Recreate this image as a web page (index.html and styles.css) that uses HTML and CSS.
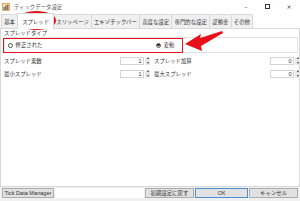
FILE: index.html
```html
<!DOCTYPE html>
<html lang="ja">
<head>
<meta charset="utf-8">
<link rel="stylesheet" href="styles.css">
</head>
<body>
<div class="window">
  <div class="titlebar">
    <svg class="appicon" width="8" height="8" viewBox="0 0 8 8">
      <rect x="0.5" y="0.5" width="7" height="7" fill="#f4d9a0" stroke="#c98a2a" stroke-width="0.6"/>
      <rect x="1.5" y="4" width="1.3" height="3" fill="#3a9a3a"/>
      <rect x="3.3" y="2.5" width="1.3" height="4.5" fill="#2f6fc4"/>
      <rect x="5.1" y="1.5" width="1.3" height="5.5" fill="#d24a2a"/>
    </svg>
    <span class="title">ティックデータ設定</span>
    <div class="controls">
      <span class="ctl">&#8211;</span>
      <span class="ctl box"></span>
      <span class="ctl">&#215;</span>
    </div>
  </div>
  <div class="tabs">
    <div class="tab">基本</div>
    <div class="tab active">スプレッド</div>
    <div class="tab">スリッページ</div>
    <div class="tab">エキゾチックバー</div>
    <div class="tab">高度な設定</div>
    <div class="tab">専門的な設定</div>
    <div class="tab">証拠金</div>
    <div class="tab">その他</div>
  </div>
  <div class="panel">
    <div class="label">スプレッドタイプ</div>
    <div class="group">
      <label class="radio"><span class="dot"></span>修正された</label>
      <label class="radio"><span class="dot on"></span>変動</label>
    </div>
    <div class="fields">
      <div class="field"><span>スプレッド乗数</span><div class="spin"><span class="val">1</span><span class="arrows"><i class="up"></i><i class="down"></i></span></div></div>
      <div class="field"><span>スプレッド加算</span><div class="spin"><span class="val">0</span><span class="arrows"><i class="up"></i><i class="down"></i></span></div></div>
      <div class="field"><span>最小スプレッド</span><div class="spin"><span class="val">1</span><span class="arrows"><i class="up"></i><i class="down"></i></span></div></div>
      <div class="field"><span>最大スプレッド</span><div class="spin"><span class="val">0</span><span class="arrows"><i class="up"></i><i class="down"></i></span></div></div>
    </div>
  </div>
  <div class="footer">
    <button class="btn tdm">Tick Data Manager</button>
    <div class="blank"></div>
    <button class="btn reset">初期設定に戻す</button>
    <button class="btn ok">OK</button>
    <button class="btn cancel">キャンセル</button>
  </div>

  <div class="mark-ellipse"></div>
  <div class="mark-rect"></div>
  <svg class="mark-arrow" width="40" height="24" viewBox="0 0 40 24">
    <path d="M38 1 L16 8 L17 4 L1 14 L18 21 L17 16 L39 3 Z" fill="#e8101a"/>
  </svg>
</div>
</body>
</html>
```
FILE: styles.css
```css
* { box-sizing: border-box; }
html, body { margin: 0; padding: 0; }
body {
  width: 300px;
  height: 201px;
  overflow: hidden;
  background: #ffffff;
  font-family: "Noto Sans CJK JP", "Noto Sans", sans-serif;
  font-size: 5.4px;
  color: #222;
}
.window {
  position: relative;
  width: 300px;
  height: 201px;
  display: flex;
  flex-direction: column;
  background: #f0f0f0;
}
.titlebar {
  height: 13px;
  flex: none;
  display: flex;
  align-items: center;
  padding-left: 2px;
  background: #ffffff;
}
.appicon { display: block; margin-right: 4px; }
.title { color: #555; font-size: 5.4px; }
.controls {
  margin-left: auto;
  display: flex;
  align-items: center;
  height: 13px;
}
.ctl {
  width: 22px;
  text-align: center;
  color: #333;
  font-family: "DejaVu Sans", sans-serif;
  font-size: 6px;
}
.ctl.box {
  width: 5px;
  height: 5px;
  border: 0.8px solid #333;
  margin: 0 8px;
}
.tabs {
  height: 16px;
  flex: none;
  display: flex;
  align-items: flex-end;
  padding-left: 1px;
  background: #ffffff;
  border-bottom: 1px solid #d9d9d9;
}
.tab {
  height: 14px;
  display: flex;
  align-items: center;
  padding: 0 2.2px;
  background: #f0f0f0;
  border: 1px solid #d9d9d9;
  border-bottom: none;
  margin-right: -1px;
  color: #333;
  white-space: nowrap;
}
.tab.active {
  height: 16px;
  background: #ffffff;
  padding: 0 4px;
  margin-bottom: -1px;
  position: relative;
  z-index: 1;
}
.panel {
  flex: 1;
  background: #ffffff;
  border-left: 1px solid #d9d9d9;
  border-right: 1px solid #d9d9d9;
  border-bottom: 1px solid #d9d9d9;
  padding: 1px 1px 0 3px;
}
.label { height: 7px; line-height: 7px; color: #333; }
.group {
  height: 16px;
  border: 1px solid #e3e3e3;
  display: grid;
  grid-template-columns: 148px 1fr;
  align-items: center;
  padding-left: 3px;
}
.radio { display: flex; align-items: center; gap: 2.5px; color: #333; }
.dot {
  width: 5px; height: 5px;
  border: 0.8px solid #555;
  border-radius: 50%;
  display: inline-flex;
  align-items: center;
  justify-content: center;
}
.dot.on::after {
  content: "";
  width: 2.4px; height: 2.4px;
  border-radius: 50%;
  background: #222;
}
.fields {
  display: grid;
  grid-template-columns: 146px 146px;
  column-gap: 4px;
  row-gap: 4px;
  margin-top: 3px;
  padding-right: 1px;
}
.field {
  height: 9px;
  display: flex;
  align-items: center;
  justify-content: space-between;
  color: #333;
}
.spin { display: flex; align-items: center; height: 9px; }
.val {
  width: 24px;
  height: 8px;
  border: 1px solid #d4d4d4;
  text-align: right;
  padding-right: 1.5px;
  line-height: 6px;
  font-family: "Liberation Sans", sans-serif;
  font-size: 5.5px;
}
.arrows {
  width: 5px;
  height: 8px;
  margin-left: 1px;
  display: flex;
  flex-direction: column;
  justify-content: space-between;
  background: #e8e8e8;
  padding: 0.5px 0;
}
.arrows i {
  width: 0; height: 0;
  margin: 0 auto;
  border-left: 1.6px solid transparent;
  border-right: 1.6px solid transparent;
}
.arrows .up { border-bottom: 2.4px solid #444; }
.arrows .down { border-top: 2.4px solid #444; }
.footer {
  height: 14px;
  flex: none;
  display: flex;
  align-items: flex-start;
  padding: 1px 2px 0 2px;
  background: #f0f0f0;
}
.btn {
  height: 10px;
  margin: 0;
  padding: 0;
  border: 1px solid #adadad;
  background: #e1e1e1;
  font-family: "Noto Sans CJK JP", "Noto Sans", sans-serif;
  font-size: 5.4px;
  color: #333;
  line-height: 8px;
}
.tdm {
  width: 52px;
  font-family: "Liberation Sans", sans-serif;
  font-size: 5.6px;
}
.blank {
  width: 89px;
  height: 10px;
  background: #ffffff;
  margin: 0 1px;
}
.reset { width: 50px; }
.ok {
  width: 53px;
  margin-left: 1px;
  border: 1px solid #4a90d9;
  font-family: "Liberation Sans", sans-serif;
}
.cancel { width: 49px; margin-left: 1px; }

/* annotations */
.mark-ellipse {
  position: absolute;
  left: 17px;
  top: 11px;
  width: 39px;
  height: 19px;
  border: 2px solid #e8101a;
  border-radius: 50%;
}
.mark-rect {
  position: absolute;
  left: 3px;
  top: 38px;
  width: 180px;
  height: 15px;
  border: 1.6px solid #e8101a;
}
.mark-arrow {
  position: absolute;
  left: 184px;
  top: 30px;
}
```
